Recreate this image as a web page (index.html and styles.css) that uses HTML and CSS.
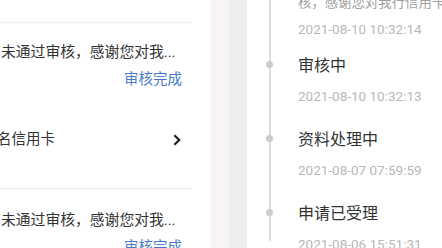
FILE: index.html
```html
<!DOCTYPE html>
<html lang="zh-CN">
<head>
<meta charset="utf-8">
<title>审核进度</title>
<link rel="stylesheet" href="styles.css">
</head>
<body>
<div class="screen">
  <section class="left">
    <div class="divider first"></div>
    <p class="desc">未通过审核，感谢您对我...</p>
    <p class="status">审核完成</p>
    <div class="card-head">
      <span class="card-name">名信用卡</span>
      <svg class="chev" width="8" height="12" viewBox="0 0 8 12"><path d="M1.4 1.2 L6.2 6 L1.4 10.8" fill="none" stroke="#222" stroke-width="2.3" stroke-linejoin="miter"/></svg>
    </div>
    <div class="divider second"></div>
    <p class="desc desc2">未通过审核，感谢您对我...</p>
    <p class="status">审核完成</p>
  </section>
  <div class="shade-a"></div>
  <div class="shade-b"></div>
  <section class="right">
    <div class="tl">
      <div class="item item0">
        <p class="note">核，感谢您对我行信用卡业务的支持</p>
        <p class="date">2021-08-10 10:32:14</p>
      </div>
      <div class="item">
        <span class="dot"></span>
        <p class="title">审核中</p>
        <p class="date">2021-08-10 10:32:13</p>
      </div>
      <div class="item">
        <span class="dot"></span>
        <p class="title">资料处理中</p>
        <p class="date">2021-08-07 07:59:59</p>
      </div>
      <div class="item">
        <span class="dot"></span>
        <p class="title">申请已受理</p>
        <p class="date">2021-08-06 15:51:31</p>
      </div>
    </div>
  </section>
</div>
</body>
</html>
```
FILE: styles.css
```css
html, body {
  margin: 0;
  padding: 0;
  background: #ffffff;
}
body {
  font-family: "Roboto", "Noto Sans CJK SC", sans-serif;
}
p { margin: 0; }
.screen {
  display: flex;
  width: 442px;
  height: 248px;
  overflow: hidden;
}
.left {
  width: 211px;
  flex: none;
  padding-right: 19px;
  box-sizing: border-box;
  background: #ffffff;
  overflow: hidden;
}
.divider {
  height: 1px;
  background: #eeeeee;
}
.divider.first { margin-top: 22px; }
.desc {
  margin-top: 18px;
  padding-left: 1px;
  font-size: 14.8px;
  line-height: 22px;
  color: #333333;
  white-space: nowrap;
}
.desc2 { margin-top: 20px; }
.status {
  margin-top: 7px;
  margin-right: 10px;
  text-align: right;
  font-size: 14.5px;
  line-height: 20px;
  color: #4a7bc9;
}
.card-head {
  margin-top: 39px;
  margin-right: 11px;
  margin-left: -3px;
  height: 22px;
  display: flex;
  align-items: center;
  justify-content: space-between;
}
.card-name {
  font-size: 14.5px;
  line-height: 22px;
  color: #333333;
}
.chev { display: block; }
.divider.second { margin-top: 37px; }
.shade-a {
  width: 18px;
  flex: none;
  background: #f7f3f6;
}
.shade-b {
  width: 18px;
  flex: none;
  background: #eeeeee;
}
.right {
  flex: 1;
  padding-left: 22px;
  background: #ffffff;
  overflow: hidden;
}
.tl {
  height: 100%;
  border-left: 2px solid #dddddd;
  padding-left: 27px;
  box-sizing: border-box;
}
.item {
  position: relative;
  padding-bottom: 23px;
}
.item0 {
  margin-top: -7px;
  padding-bottom: 16px;
}
.dot {
  position: absolute;
  left: -32px;
  top: 6px;
  width: 7px;
  height: 7px;
  border-radius: 50%;
  background: #cccccc;
}
.note {
  font-size: 13.4px;
  line-height: 20px;
  margin-bottom: 6px;
  color: #a0a0a0;
  white-space: nowrap;
}
.title {
  font-size: 16px;
  line-height: 22px;
  color: #333333;
  margin-bottom: 9px;
}
.date {
  font-size: 13.5px;
  line-height: 20px;
  color: #b8b8b8;
  white-space: nowrap;
}
```
